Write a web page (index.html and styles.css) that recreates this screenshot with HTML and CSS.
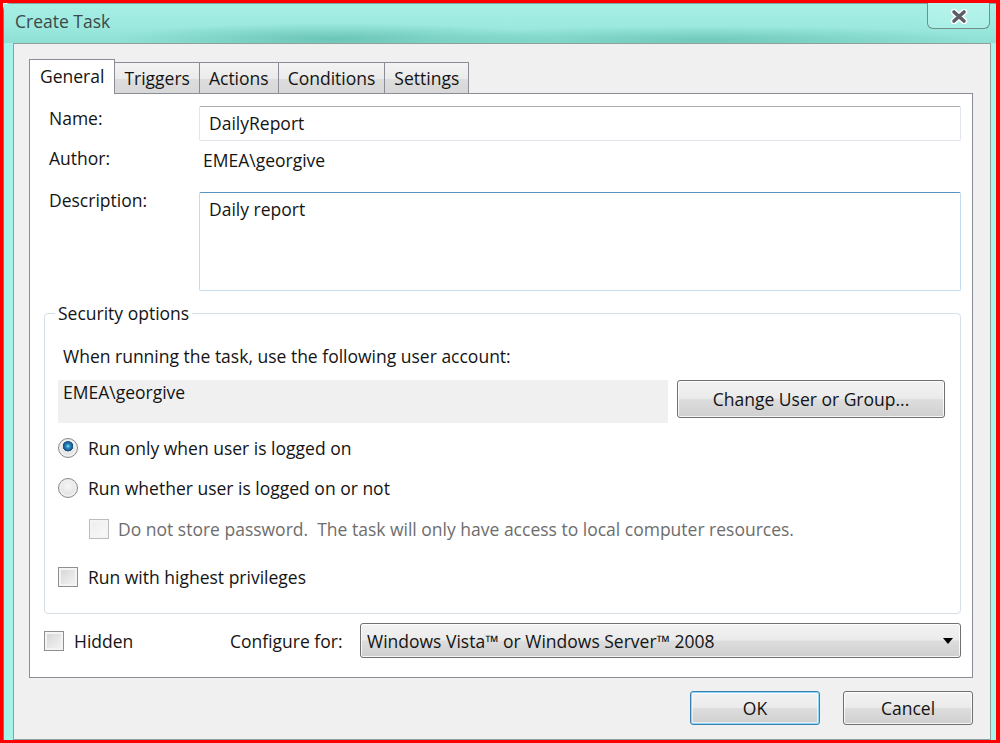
FILE: index.html
```html
<!DOCTYPE html>
<html lang="en">

<head>
    <meta charset="UTF-8">
    <title>Create Task</title>
    <link rel="stylesheet" href="styles.css">
</head>

<body>
    <div class="screen">
        <div class="window">
            <div class="titlebar">
                <span class="title">Create Task</span>
                <div class="close">
                    <svg width="18" height="15" viewBox="0 0 18 15">
                        <path d="M4 3 L14 12 M14 3 L4 12" stroke="#fff" stroke-width="6.5" stroke-linecap="round" />
                        <path d="M4 3 L14 12 M14 3 L4 12" stroke="#5b6068" stroke-width="3.6" stroke-linecap="round" />
                    </svg>
                </div>
            </div>

            <div class="client">
                <div class="tabs">
                    <div class="tab active">General</div>
                    <div class="tab">Triggers</div>
                    <div class="tab">Actions</div>
                    <div class="tab">Conditions</div>
                    <div class="tab">Settings</div>
                </div>

                <div class="panel">
                    <div class="form">
                        <div class="label">Name:</div>
                        <div class="input">DailyReport</div>
                        <div class="label author-label">Author:</div>
                        <div class="value">EMEA\georgive</div>
                        <div class="label desc-label">Description:</div>
                        <div class="textarea">Daily report</div>
                    </div>

                    <fieldset class="security">
                        <legend>Security options</legend>
                        <p class="intro">When running the task, use the following user account:</p>
                        <div class="account-row">
                            <div class="account">EMEA\georgive</div>
                            <div class="button change">Change User or Group...</div>
                        </div>
                        <div class="option first">
                            <span class="radio checked"></span>
                            <span>Run only when user is logged on</span>
                        </div>
                        <div class="option second">
                            <span class="radio"></span>
                            <span>Run whether user is logged on or not</span>
                        </div>
                        <div class="option sub disabled">
                            <span class="check"></span>
                            <span>Do not store password.&nbsp; The task will only have access to local computer resources.</span>
                        </div>
                        <div class="option last">
                            <span class="check"></span>
                            <span>Run with highest privileges</span>
                        </div>
                    </fieldset>

                    <div class="bottom-row">
                        <div class="hidden-opt">
                            <span class="check"></span>
                            <span>Hidden</span>
                        </div>
                        <div class="configure">Configure for:</div>
                        <div class="select">
                            <span>Windows Vista™ or Windows Server™ 2008</span>
                            <span class="arrow"></span>
                        </div>
                    </div>
                </div>

                <div class="buttons">
                    <div class="button ok">OK</div>
                    <div class="button">Cancel</div>
                </div>
            </div>
        </div>
    </div>
</body>

</html>
```

FILE: styles.css
```css
* {
    padding: 0;
    margin: 0;
    box-sizing: border-box;
}

body {
    background-color: #ffffff;
    font-family: "Open Sans", "Noto Sans", sans-serif;
    font-size: 17.5px;
    color: #141414;
}

.screen {
    width: 1000px;
    height: 743px;
    border: 3px solid #ff0000;
    border-right-width: 4px;
}

.window {
    height: 100%;
    display: flex;
    flex-direction: column;
    border-left: 1px solid #5f8580;
    border-top: 1px solid #7fa8a2;
    border-top-left-radius: 7px;
    background: linear-gradient(90deg, #a4f2e9, #a8f3eb);
}

.titlebar {
    height: 39px;
    display: flex;
    justify-content: space-between;
    align-items: flex-start;
    background:
        radial-gradient(ellipse 220px 16px at 330px 35px, rgba(90, 185, 170, 0.7), rgba(90, 185, 170, 0)),
        radial-gradient(ellipse 280px 14px at 700px 36px, rgba(90, 185, 170, 0.6), rgba(90, 185, 170, 0)),
        linear-gradient(#a6efe6, #9ce9df 55%, #8fe0d4);
}

.title {
    margin-left: 11px;
    margin-top: 5px;
    font-size: 17.5px;
    color: #3d4848;
}

.close {
    width: 63px;
    height: 26px;
    margin-right: 6px;
    margin-top: -1px;
    border: 1px solid #71908b;
    border-top: none;
    border-radius: 0 0 6px 6px;
    background: linear-gradient(#b6f4ec, #a9efe6);
    display: flex;
    align-items: center;
    justify-content: center;
    padding-top: 1px;
}

.client {
    flex: 1;
    display: flex;
    flex-direction: column;
    margin: 0 5px 0 9px;
    border: 1px solid #8ea09d;
    background-color: #f0f0f0;
    padding: 15px 17px 14px 15px;
}

.tabs {
    display: flex;
    align-items: flex-end;
    height: 35px;
}

.tab {
    height: 32px;
    line-height: 30px;
    padding: 0 9px;
    margin-right: -1px;
    border: 1px solid #8a8d95;
    border-bottom: none;
    background: linear-gradient(#f3f3f3, #ebebeb 50%, #dddddd 51%, #d7d7d7);
}

.tab.active {
    position: relative;
    z-index: 1;
    height: 35px;
    line-height: 32px;
    padding: 0 10px;
    background: #ffffff;
}

.panel {
    flex: 1;
    margin-top: -1px;
    background-color: #ffffff;
    border: 1px solid #8a8d95;
    padding: 12px 11px 0 14px;
}

.form {
    display: grid;
    grid-template-columns: 150px 1fr;
    grid-template-rows: 35px 47px 103px;
    padding-left: 5px;
    line-height: 24px;
}

.author-label {
    padding-top: 5px;
}

.value {
    padding-top: 7px;
    padding-left: 4px;
}

.desc-label {
    padding-top: 0;
}

.input {
    border: 1px solid #e0e6ec;
    border-top-color: #abadb3;
    border-radius: 2px;
    padding: 4px 9px;
}

.textarea {
    margin-top: 4px;
    border: 1px solid #c5daed;
    border-top-color: #5c93bc;
    border-radius: 2px;
    padding: 4px 9px;
}

.security {
    margin-top: 10px;
    border: 1px solid #d5dfe5;
    border-radius: 4px;
    padding: 0 15px 24px 13px;
    line-height: 24px;
}

.security legend {
    margin-left: -3px;
    padding: 0 3px;
}

.intro {
    margin-top: 19px;
    margin-left: 5px;
}

.account-row {
    display: flex;
    gap: 9px;
    margin-top: 12px;
}

.account {
    width: 610px;
    height: 43px;
    background-color: #f0f0f0;
    padding: 0 5px;
}

.button {
    height: 34px;
    border: 1px solid #707070;
    border-radius: 3px;
    background: linear-gradient(#f2f2f2, #ebebeb 48%, #dddddd 52%, #cfcfcf);
    box-shadow: inset 0 0 0 1px rgba(255, 255, 255, 0.8);
    display: flex;
    align-items: center;
    justify-content: center;
}

.button.change {
    flex: 1;
    height: 38px;
}

.option {
    display: flex;
    align-items: center;
    gap: 10px;
    height: 24px;
}

.option.first {
    margin-top: 13px;
}

.option.second {
    margin-top: 16px;
}

.option.sub {
    margin-top: 17px;
    margin-left: 31px;
    gap: 9px;
}

.option.last {
    margin-top: 24px;
}

.disabled {
    color: #6d6d6d;
}

.radio {
    width: 20px;
    height: 20px;
    border-radius: 50%;
    border: 1px solid #8a8a8a;
    background: radial-gradient(circle at 50% 40%, #f7f7f7, #d6d6d6);
    box-shadow: inset 0 0 0 2px #f0f0f0;
}

.radio.checked {
    background:
        radial-gradient(circle at 50% 40%, #8fe2ff 0, #2d8bc4 2px, #134a7a 5px, rgba(0, 0, 0, 0) 5.5px),
        radial-gradient(circle at 50% 40%, #f7f7f7, #d6d6d6);
}

.check {
    width: 20px;
    height: 20px;
    border: 1px solid #8e8f8f;
    background: linear-gradient(135deg, #d4d4d4, #f6f6f6);
    box-shadow: inset 0 0 0 2px #f4f4f4;
}

.disabled .check {
    border-color: #bcbcbc;
    background: linear-gradient(135deg, #ececec, #fafafa);
}

.bottom-row {
    display: flex;
    align-items: center;
    margin-top: 9px;
    height: 35px;
}

.hidden-opt {
    display: flex;
    align-items: center;
    gap: 10px;
    width: 186px;
}

.configure {
    width: 130px;
}

.select {
    flex: 1;
    height: 35px;
    border: 1px solid #707070;
    border-radius: 3px;
    background: linear-gradient(#f2f2f2, #ebebeb 48%, #dddddd 52%, #cfcfcf);
    box-shadow: inset 0 0 0 1px rgba(255, 255, 255, 0.8);
    display: flex;
    align-items: center;
    justify-content: space-between;
    padding: 0 7px 0 6px;
}

.arrow {
    width: 0;
    height: 0;
    border-left: 5px solid transparent;
    border-right: 5px solid transparent;
    border-top: 6px solid #000000;
}

.buttons {
    display: flex;
    justify-content: flex-end;
    gap: 23px;
    margin-top: 13px;
}

.buttons .button {
    width: 130px;
}

.button.ok {
    border-color: #3c7fb1;
    box-shadow: inset 0 0 0 1px #8ad8f6, inset 0 0 0 2px rgba(255, 255, 255, 0.6);
}
```
